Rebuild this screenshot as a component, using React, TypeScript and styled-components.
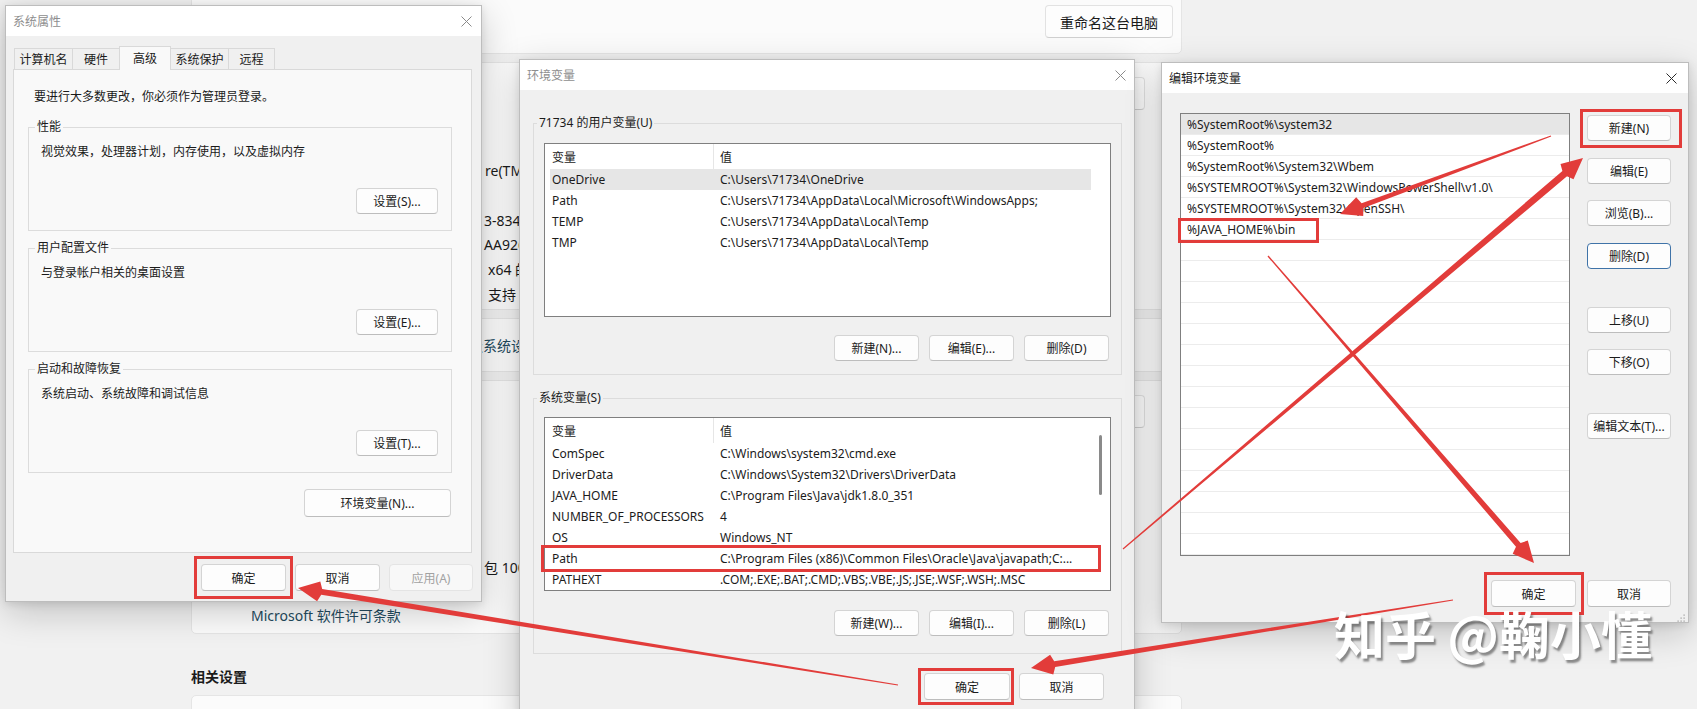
import styled, { createGlobalStyle } from "styled-components";

const UI_FONT = `"Noto Sans", "Noto Sans CJK SC", sans-serif`;
const CJK_FONT = `"Noto Sans CJK SC", sans-serif`;
const MARK_RED = "#e23c3a";
const LINK_COLOR = "#234a5e";

type Pt = [number, number];

const GlobalStyle = createGlobalStyle`
  html, body { margin: 0; padding: 0; }
  body {
    font-family: ${UI_FONT};
    font-size: 12px;
    color: #1b1b1b;
    background: #f1f1f1;
  }
  *, *::before, *::after { box-sizing: border-box; }
`;

const Desktop = styled.div`
  position: relative;
  width: 1697px;
  height: 709px;
  overflow: hidden;
  background: #f1f1f1;
`;

/* ---------- settings page behind the dialogs ---------- */

const SettingsPage = styled.div`
  position: absolute;
  left: 191px;
  top: -10px;
  width: 991px;
  display: flex;
  flex-direction: column;
  gap: 8px;
  font-size: 14px;
`;

const Card = styled.div<{ $h: number }>`
  height: ${p => p.$h}px;
  flex: none;
  display: flex;
  flex-direction: column;
  background: #fbfbfb;
  border: 1px solid #e5e5e5;
  border-radius: 5px;
`;

const CardHeader = styled.div<{ $h: number }>`
  height: ${p => p.$h}px;
  flex: none;
  display: flex;
  align-items: center;
  justify-content: flex-end;
  padding-right: 36px;
`;

const PageButton = styled.div<{ $w: number }>`
  width: ${p => p.$w}px;
  height: 33px;
  flex: none;
  display: flex;
  align-items: center;
  justify-content: center;
  background: #fdfdfd;
  border: 1px solid #e2e2e2;
  border-bottom-color: #d0d0d0;
  border-radius: 4px;
`;

const RenameRow = styled.div`
  display: flex;
  justify-content: flex-end;
  padding: 14px 8px 0 0;
`;

const SpecRows = styled.div<{ $pt: number }>`
  padding-top: ${p => p.$pt}px;
  display: flex;
  flex-direction: column;
`;

/* only the sliver of each value between the two dialogs is visible */
const SpecValue = styled.div<{ $h: number; $indent?: number }>`
  height: ${p => p.$h}px;
  display: flex;
  align-items: center;
  padding-left: ${p => p.$indent ?? 293}px;
  white-space: nowrap;
`;

const PageLink = styled.span<{ $indent?: number }>`
  color: ${LINK_COLOR};
  padding-left: ${p => p.$indent ?? 0}px;
  white-space: nowrap;
`;

const LinkRow = styled.div`
  flex: 1;
  display: flex;
  align-items: center;
  padding-left: 263px;
`;

const LinkLine = styled.div`
  height: 24px;
  display: flex;
  align-items: center;
`;

const SectionTitle = styled.div`
  margin-top: 25px;
  height: 20px;
  line-height: 20px;
  font-weight: 600;
`;

/* ---------- dialog chrome ---------- */

const Window = styled.div<{ $x: number; $y: number; $w: number; $h: number }>`
  position: absolute;
  left: ${p => p.$x}px;
  top: ${p => p.$y}px;
  width: ${p => p.$w}px;
  height: ${p => p.$h}px;
  display: flex;
  flex-direction: column;
  background: #f0f0f0;
  border: 1px solid #bdbdbd;
  box-shadow: 0 10px 34px rgba(0, 0, 0, 0.2), 0 2px 8px rgba(0, 0, 0, 0.1);
`;

const TitleBar = styled.div<{ $active?: boolean }>`
  flex: none;
  height: 30px;
  display: flex;
  align-items: center;
  justify-content: space-between;
  padding-left: 7px;
  background: #ffffff;
  color: ${p => (p.$active ? "#1b1b1b" : "#8e8e8e")};
  font-size: 12px;
`;

const CloseBox = styled.div<{ $w: number }>`
  width: ${p => p.$w}px;
  height: 30px;
  display: flex;
  align-items: center;
  justify-content: center;
`;

const Button = styled.button<{ $w: number; $h?: number; $focus?: boolean }>`
  width: ${p => p.$w}px;
  height: ${p => p.$h ?? 26}px;
  flex: none;
  padding: 0;
  font-family: ${UI_FONT};
  font-size: 12px;
  color: #1b1b1b;
  background: #fdfdfd;
  border: 1px solid ${p => (p.$focus ? "#3f73a8" : "#d4d4d4")};
  border-bottom-color: ${p => (p.$focus ? "#3f73a8" : "#bdbdbd")};
  border-radius: 4px;
  &:disabled {
    color: #a2a2a2;
    background: #f8f8f8;
    border-color: #e4e4e4;
  }
`;

const ButtonRow = styled.div<{ $mt: number; $pr: number; $gap: number }>`
  display: flex;
  justify-content: flex-end;
  gap: ${p => p.$gap}px;
  margin-top: ${p => p.$mt}px;
  padding-right: ${p => p.$pr}px;
`;

/* ---------- 系统属性 ---------- */

const TabStrip = styled.div`
  margin-top: 10px;
  height: 23px;
  display: flex;
  align-items: flex-end;
  padding-left: 9px;
`;

const Tab = styled.div<{ $w: number; $active?: boolean }>`
  position: relative;
  z-index: ${p => (p.$active ? 2 : 1)};
  width: ${p => p.$w}px;
  height: ${p => (p.$active ? 24 : 21)}px;
  margin-left: -1px;
  margin-bottom: ${p => (p.$active ? -1 : 0)}px;
  display: flex;
  align-items: center;
  justify-content: center;
  background: ${p => (p.$active ? "#f9f9f9" : "#f0f0f0")};
  border: 1px solid #d9d9d9;
  border-bottom: none;
  padding-bottom: ${p => (p.$active ? 2 : 0)}px;
  font-size: 12px;
`;

const TabPanel = styled.div`
  position: relative;
  z-index: 1;
  height: 484px;
  margin: 0 9px 0 7px;
  display: flex;
  flex-direction: column;
  gap: 9px;
  padding: 19px 19px 0 14px;
  background: #f9f9f9;
  border: 1px solid #d9d9d9;
`;

const Notice = styled.div`
  height: 16px;
  line-height: 16px;
  margin: 0 0 5px 6px;
`;

const Group = styled.fieldset<{ $pad: string; $mt?: number }>`
  margin: ${p => p.$mt ?? 0}px 0 0 0;
  min-width: 0;
  padding: ${p => p.$pad};
  border: 1px solid #dcdcdc;
`;

const GroupLabel = styled.legend<{ $ml: number }>`
  margin-left: ${p => p.$ml}px;
  padding: 0 2px;
  font-size: 12px;
  line-height: 16px;
`;

const GroupBody = styled.div`
  display: flex;
  flex-direction: column;
`;

const GroupText = styled.div`
  height: 16px;
  line-height: 16px;
`;

const GroupAction = styled.div`
  margin-top: 28px;
  display: flex;
  justify-content: flex-end;
`;

const PanelAction = styled.div`
  margin-top: 7px;
  display: flex;
  justify-content: flex-end;
  padding-right: 1px;
`;

/* ---------- 环境变量 ---------- */

const EnvBody = styled.div`
  padding: 25px 12px 0 13px;
  display: flex;
  flex-direction: column;
`;

const ListBox = styled.div`
  height: 174px;
  display: flex;
  background: #ffffff;
  border: 1px solid #7f7f7f;
`;

const ListBody = styled.div`
  flex: 1;
  min-width: 0;
  padding-left: 5px;
  display: flex;
  flex-direction: column;
`;

const ScrollTrack = styled.div`
  width: 19px;
  flex: none;
  display: flex;
  justify-content: center;
  align-items: flex-start;
  padding-top: 17px;
`;

const ScrollThumb = styled.div`
  width: 3px;
  height: 60px;
  border-radius: 2px;
  background: #8a8a8a;
`;

const VarRow = styled.div<{ $head?: boolean; $selected?: boolean }>`
  height: ${p => (p.$head ? 25 : 21)}px;
  flex: none;
  display: grid;
  grid-template-columns: 163px 1fr;
  align-items: stretch;
  background: ${p => (p.$selected ? "#e6e6e6" : "transparent")};
`;

const VarCell = styled.div<{ $divider?: boolean }>`
  display: flex;
  align-items: center;
  padding-left: ${p => (p.$divider ? 6 : 2)}px;
  border-left: ${p => (p.$divider ? "1px solid #e6e6e6" : "none")};
  white-space: nowrap;
  overflow: hidden;
`;

const ValueCell = styled(VarCell)`
  padding-left: 7px;
`;

/* ---------- 编辑环境变量 ---------- */

const EditBody = styled.div`
  display: flex;
  gap: 17px;
  padding: 20px 17px 0 18px;
`;

const PathList = styled.div`
  width: 390px;
  height: 443px;
  flex: none;
  display: flex;
  flex-direction: column;
  background: #ffffff;
  border: 1px solid #7f7f7f;
  overflow: hidden;
`;

const PathRow = styled.div<{ $selected?: boolean }>`
  height: 21px;
  flex: none;
  display: flex;
  align-items: center;
  padding-left: 6px;
  border-bottom: 1px solid #ececec;
  background: ${p => (p.$selected ? "#e6e6e6" : "transparent")};
  white-space: nowrap;
`;

const SideButtons = styled.div`
  width: 84px;
  display: flex;
  flex-direction: column;
  gap: 16.5px;
  padding-top: 2px;
`;

const SideGap = styled.div`
  height: 5px;
`;

const Grip = styled.div`
  position: absolute;
  right: 2px;
  bottom: 2px;
  width: 10px;
  height: 10px;
`;

/* ---------- annotations ---------- */

const Overlay = styled.svg`
  position: absolute;
  left: 0;
  top: 0;
  pointer-events: none;
`;

const Watermark = styled.div`
  position: absolute;
  left: 1334px;
  top: 608px;
  font-family: ${CJK_FONT};
  font-size: 51px;
  font-weight: 700;
  line-height: 51px;
  color: #ffffff;
  white-space: pre;
  text-shadow: 2px 3px 2px rgba(70, 70, 70, 0.6);
`;

const USER_VARS: [string, string][] = [
  ["OneDrive", "C:\\Users\\71734\\OneDrive"],
  ["Path", "C:\\Users\\71734\\AppData\\Local\\Microsoft\\WindowsApps;"],
  ["TEMP", "C:\\Users\\71734\\AppData\\Local\\Temp"],
  ["TMP", "C:\\Users\\71734\\AppData\\Local\\Temp"],
];

const SYSTEM_VARS: [string, string][] = [
  ["ComSpec", "C:\\Windows\\system32\\cmd.exe"],
  ["DriverData", "C:\\Windows\\System32\\Drivers\\DriverData"],
  ["JAVA_HOME", "C:\\Program Files\\Java\\jdk1.8.0_351"],
  ["NUMBER_OF_PROCESSORS", "4"],
  ["OS", "Windows_NT"],
  ["Path", "C:\\Program Files (x86)\\Common Files\\Oracle\\Java\\javapath;C:..."],
  ["PATHEXT", ".COM;.EXE;.BAT;.CMD;.VBS;.VBE;.JS;.JSE;.WSF;.WSH;.MSC"],
];

const PATH_ENTRIES = [
  "%SystemRoot%\\system32",
  "%SystemRoot%",
  "%SystemRoot%\\System32\\Wbem",
  "%SYSTEMROOT%\\System32\\WindowsPowerShell\\v1.0\\",
  "%SYSTEMROOT%\\System32\\OpenSSH\\",
  "%JAVA_HOME%\\bin",
];
const PATH_ROWS = 21;

// what shows of the device spec values in the gap between 系统属性 and 环境变量
const DEVICE_SLIVERS: [string, number][] = [
  ["", 293],
  ["re(TM)", 293],
  ["", 293],
  ["3-834", 292],
  ["AA926", 292],
  ["x64 的", 296],
  ["支持", 296],
];

// [left, top, right, bottom] outer edges of the red frames
const BOXES: [number, number, number, number][] = [
  [194, 556, 293, 599],
  [541, 545, 1101, 572],
  [918, 668, 1014, 705],
  [1178, 218, 1319, 243],
  [1580, 109, 1682, 148],
  [1484, 572, 1584, 615],
];

const ARROWS: { from: Pt; to: Pt; w: number }[] = [
  { from: [1453, 600], to: [1031, 668], w: 6 },
  { from: [898, 685], to: [298, 588], w: 6 },
  { from: [1123, 549], to: [1583, 158], w: 7 },
  { from: [1551, 136], to: [1340, 214], w: 5 },
  { from: [1268, 256], to: [1534, 563], w: 6 },
];

const arrowPoints = (from: Pt, to: Pt, w: number) => {
  const [x1, y1] = from;
  const [x2, y2] = to;
  const len = Math.hypot(x2 - x1, y2 - y1);
  const ux = (x2 - x1) / len;
  const uy = (y2 - y1) / len;
  const nx = -uy;
  const ny = ux;
  const headLen = 24;
  const headHalf = 10;
  const bx = x2 - ux * headLen;
  const by = y2 - uy * headLen;
  const pts: Pt[] = [
    [x1 + nx * 0.6, y1 + ny * 0.6],
    [bx + (nx * w) / 2, by + (ny * w) / 2],
    [bx + ux * 3 + nx * headHalf, by + uy * 3 + ny * headHalf],
    [x2, y2],
    [bx + ux * 3 - nx * headHalf, by + uy * 3 - ny * headHalf],
    [bx - (nx * w) / 2, by - (ny * w) / 2],
    [x1 - nx * 0.6, y1 - ny * 0.6],
  ];
  return pts.map(p => `${p[0].toFixed(1)},${p[1].toFixed(1)}`).join(" ");
};

const CloseIcon = ({ color }: { color: string }) => (
  <svg width="11" height="11" viewBox="0 0 11 11">
    <path d="M0.5 0.5 L10.5 10.5 M10.5 0.5 L0.5 10.5" stroke={color} strokeWidth="1" fill="none" />
  </svg>
);

const VarList = ({ rows, selected, scroll }: { rows: [string, string][]; selected?: number; scroll?: boolean }) => (
  <ListBox>
    <ListBody>
      <VarRow $head>
        <VarCell>变量</VarCell>
        <VarCell $divider>值</VarCell>
      </VarRow>
      {rows.map(([name, value], i) => (
        <VarRow key={name + i} $selected={i === selected}>
          <VarCell>{name}</VarCell>
          <ValueCell>{value}</ValueCell>
        </VarRow>
      ))}
    </ListBody>
    <ScrollTrack>{scroll && <ScrollThumb />}</ScrollTrack>
  </ListBox>
);

const SettingsBackdrop = () => (
  <SettingsPage>
    <Card $h={64}>
      <RenameRow>
        <PageButton $w={128}>重命名这台电脑</PageButton>
      </RenameRow>
    </Card>
    <Card $h={248}>
      <CardHeader $h={60}>
        <PageButton $w={66}>复制</PageButton>
      </CardHeader>
      <SpecRows $pt={11}>
        {DEVICE_SLIVERS.map(([text, indent], i) => (
          <SpecValue key={i} $h={24.6} $indent={indent}>
            {text}
          </SpecValue>
        ))}
      </SpecRows>
    </Card>
    <Card $h={54}>
      <LinkRow>
        <PageLink>高级系统设置</PageLink>
      </LinkRow>
    </Card>
    <Card $h={254}>
      <CardHeader $h={60}>
        <PageButton $w={66}>复制</PageButton>
      </CardHeader>
      <SpecRows $pt={114}>
        <SpecValue $h={24} $indent={292}>
          包 1000
        </SpecValue>
        <LinkLine />
        <LinkLine>
          <PageLink $indent={59}>Microsoft 软件许可条款</PageLink>
        </LinkLine>
      </SpecRows>
    </Card>
    <SectionTitle>相关设置</SectionTitle>
    <Card $h={70} />
  </SettingsPage>
);

const SystemProperties = () => (
  <Window $x={5} $y={5} $w={477} $h={597}>
    <TitleBar>
      <span>系统属性</span>
      <CloseBox $w={29}>
        <CloseIcon color="#8a8a8a" />
      </CloseBox>
    </TitleBar>
    <TabStrip>
      <Tab $w={59}>计算机名</Tab>
      <Tab $w={48}>硬件</Tab>
      <Tab $w={52} $active>
        高级
      </Tab>
      <Tab $w={59}>系统保护</Tab>
      <Tab $w={47}>远程</Tab>
    </TabStrip>
    <TabPanel>
      <Notice>要进行大多数更改，你必须作为管理员登录。</Notice>
      <Group $pad="9px 13px 16px 12px">
        <GroupLabel $ml={-6}>性能</GroupLabel>
        <GroupBody>
          <GroupText>视觉效果，处理器计划，内存使用，以及虚拟内存</GroupText>
          <GroupAction>
            <Button $w={82}>设置(S)...</Button>
          </GroupAction>
        </GroupBody>
      </Group>
      <Group $pad="9px 13px 16px 12px">
        <GroupLabel $ml={-6}>用户配置文件</GroupLabel>
        <GroupBody>
          <GroupText>与登录帐户相关的桌面设置</GroupText>
          <GroupAction>
            <Button $w={82}>设置(E)...</Button>
          </GroupAction>
        </GroupBody>
      </Group>
      <Group $pad="9px 13px 16px 12px">
        <GroupLabel $ml={-6}>启动和故障恢复</GroupLabel>
        <GroupBody>
          <GroupText>系统启动、系统故障和调试信息</GroupText>
          <GroupAction>
            <Button $w={82}>设置(T)...</Button>
          </GroupAction>
        </GroupBody>
      </Group>
      <PanelAction>
        <Button $w={147} $h={28}>
          环境变量(N)...
        </Button>
      </PanelAction>
    </TabPanel>
    <ButtonRow $mt={11} $pr={8} $gap={9}>
      <Button $w={85} $h={27}>
        确定
      </Button>
      <Button $w={85} $h={27}>
        取消
      </Button>
      <Button $w={84} $h={27} disabled>
        应用(A)
      </Button>
    </ButtonRow>
  </Window>
);

const EnvironmentVariables = () => (
  <Window $x={519} $y={59} $w={616} $h={670}>
    <TitleBar>
      <span>环境变量</span>
      <CloseBox $w={28}>
        <CloseIcon color="#8a8a8a" />
      </CloseBox>
    </TitleBar>
    <EnvBody>
      <Group $pad="12px 10px 13px 10px">
        <GroupLabel $ml={-7}>71734 的用户变量(U)</GroupLabel>
        <GroupBody>
          <VarList rows={USER_VARS} selected={0} />
          <ButtonRow $mt={18} $pr={2} $gap={10}>
            <Button $w={85}>新建(N)...</Button>
            <Button $w={85}>编辑(E)...</Button>
            <Button $w={85}>删除(D)</Button>
          </ButtonRow>
        </GroupBody>
      </Group>
      <Group $pad="11px 10px 17px 10px" $mt={15}>
        <GroupLabel $ml={-7}>系统变量(S)</GroupLabel>
        <GroupBody>
          <VarList rows={SYSTEM_VARS} scroll />
          <ButtonRow $mt={19} $pr={2} $gap={10}>
            <Button $w={85}>新建(W)...</Button>
            <Button $w={85}>编辑(I)...</Button>
            <Button $w={85}>删除(L)</Button>
          </ButtonRow>
        </GroupBody>
      </Group>
      <ButtonRow $mt={19} $pr={18} $gap={9}>
        <Button $w={86} $h={27}>
          确定
        </Button>
        <Button $w={85} $h={27}>
          取消
        </Button>
      </ButtonRow>
    </EnvBody>
  </Window>
);

const EditEnvironmentVariable = () => (
  <Window $x={1161} $y={62} $w={528} $h={561}>
    <TitleBar $active>
      <span>编辑环境变量</span>
      <CloseBox $w={34}>
        <CloseIcon color="#2b2b2b" />
      </CloseBox>
    </TitleBar>
    <EditBody>
      <PathList>
        {Array.from({ length: PATH_ROWS }, (_, i) => (
          <PathRow key={i} $selected={i === 0}>
            {PATH_ENTRIES[i] ?? ""}
          </PathRow>
        ))}
      </PathList>
      <SideButtons>
        <Button $w={84}>新建(N)</Button>
        <Button $w={84}>编辑(E)</Button>
        <Button $w={84}>浏览(B)...</Button>
        <Button $w={84} $focus>
          删除(D)
        </Button>
        <SideGap />
        <Button $w={84}>上移(U)</Button>
        <Button $w={84}>下移(O)</Button>
        <SideGap />
        <Button $w={84}>编辑文本(T)...</Button>
      </SideButtons>
    </EditBody>
    <ButtonRow $mt={24} $pr={17} $gap={11}>
      <Button $w={85} $h={27}>
        确定
      </Button>
      <Button $w={84} $h={27}>
        取消
      </Button>
    </ButtonRow>
    <Grip>
      <svg width="10" height="10" viewBox="0 0 10 10">
        {[
          [8, 2],
          [8, 5],
          [5, 5],
          [8, 8],
          [5, 8],
          [2, 8],
        ].map(([cx, cy]) => (
          <rect key={`${cx}-${cy}`} x={cx - 0.5} y={cy - 0.5} width="1.2" height="1.2" fill="#9a9a9a" />
        ))}
      </svg>
    </Grip>
  </Window>
);

export default function App() {
  return (
    <>
      <GlobalStyle />
      <Desktop>
        <SettingsBackdrop />
        <SystemProperties />
        <EnvironmentVariables />
        <EditEnvironmentVariable />
        <Overlay width="1697" height="709" viewBox="0 0 1697 709">
          {BOXES.map(([l, t, r, b], i) => (
            <rect
              key={`box-${i}`}
              x={l + 1.5}
              y={t + 1.5}
              width={r - l - 3}
              height={b - t - 3}
              fill="none"
              stroke={MARK_RED}
              strokeWidth="3"
            />
          ))}
          {ARROWS.map((a, i) => (
            <polygon key={`arrow-${i}`} points={arrowPoints(a.from, a.to, a.w)} fill={MARK_RED} />
          ))}
        </Overlay>
        <Watermark>知乎 @鞠小懂</Watermark>
      </Desktop>
    </>
  );
}
